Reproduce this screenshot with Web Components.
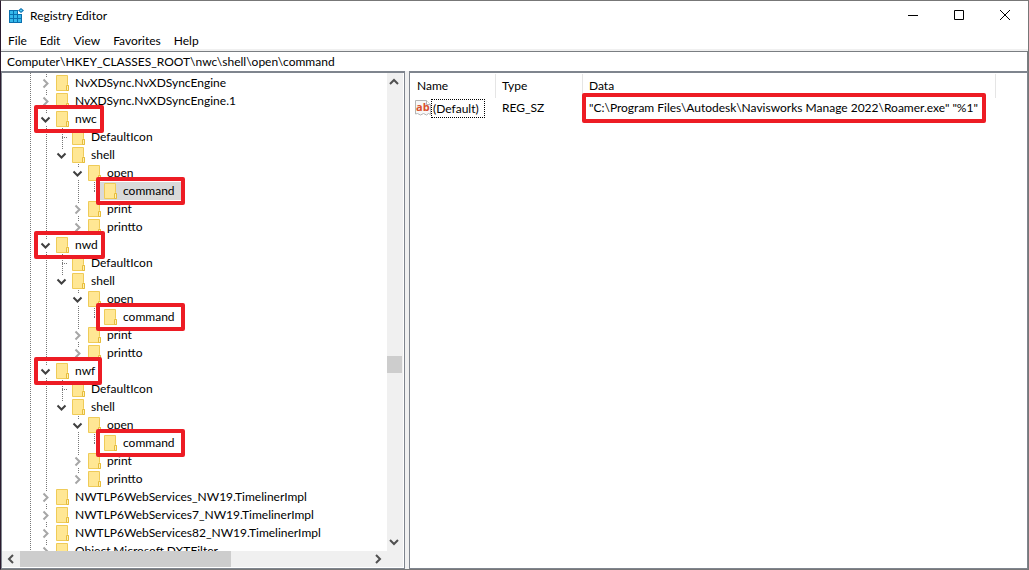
<!DOCTYPE html>
<html lang="en">
<head>
<meta charset="utf-8">
<title>Registry Editor</title>
<style>
  html, body { margin: 0; height: 100%; }
  body { font: 12px/18px Lato, "Open Sans", sans-serif; color: #000; background: #fff; overflow: hidden; }
</style>
</head>
<body>
<registry-window>
  <title-bar slot="title">Registry Editor</title-bar>
  <menu-bar slot="menu" items="File,Edit,View,Favorites,Help"></menu-bar>
  <address-bar slot="address" path="Computer\HKEY_CLASSES_ROOT\nwc\shell\open\command"></address-bar>
  <key-pane slot="tree">
    <key-item label="NvXDSync.NvXDSyncEngine" state="closed"></key-item>
    <key-item label="NvXDSync.NvXDSyncEngine.1" state="closed"></key-item>
    <key-item label="nwc" state="open" marked>
      <key-item label="DefaultIcon"></key-item>
      <key-item label="shell" state="open" last>
        <key-item label="open" state="open">
          <key-item label="command" marked selected last></key-item>
        </key-item>
        <key-item label="print" state="closed"></key-item>
        <key-item label="printto" state="closed" last></key-item>
      </key-item>
    </key-item>
    <key-item label="nwd" state="open" marked>
      <key-item label="DefaultIcon"></key-item>
      <key-item label="shell" state="open" last>
        <key-item label="open" state="open">
          <key-item label="command" marked last></key-item>
        </key-item>
        <key-item label="print" state="closed"></key-item>
        <key-item label="printto" state="closed" last></key-item>
      </key-item>
    </key-item>
    <key-item label="nwf" state="open" marked>
      <key-item label="DefaultIcon"></key-item>
      <key-item label="shell" state="open" last>
        <key-item label="open" state="open">
          <key-item label="command" marked last></key-item>
        </key-item>
        <key-item label="print" state="closed"></key-item>
        <key-item label="printto" state="closed" last></key-item>
      </key-item>
    </key-item>
    <key-item label="NWTLP6WebServices_NW19.TimelinerImpl" state="closed"></key-item>
    <key-item label="NWTLP6WebServices7_NW19.TimelinerImpl" state="closed"></key-item>
    <key-item label="NWTLP6WebServices82_NW19.TimelinerImpl" state="closed"></key-item>
    <key-item label="Object.Microsoft.DXTFilter" state="closed"></key-item>
  </key-pane>
  <value-list slot="values"></value-list>
</registry-window>

<script>
  const define = (name, html, setup) => {
    const template = document.createElement('template');
    template.innerHTML = html;
    customElements.define(name, class extends HTMLElement {
      constructor() {
        super();
        this.attachShadow({ mode: 'open' }).append(template.content.cloneNode(true));
      }
      connectedCallback() {
        if (setup) setup(this, this.shadowRoot);
      }
    });
  };

  define('registry-window', `
    <style>
      :host { display: flex; flex-direction: column; height: 100vh; box-sizing: border-box;
        border: 1px solid #777; border-left-color: #2b1a2e; background: #fff; }
      main { flex: 1; min-height: 0; display: grid; grid-template-columns: 404px 1fr; gap: 4px;
        background: #f0f0f0; border-right: 1px solid #7f858e; }
      ::slotted([slot=tree]), ::slotted([slot=values]) { min-width: 0; min-height: 0; }
    </style>
    <slot name="title"></slot>
    <slot name="menu"></slot>
    <slot name="address"></slot>
    <main><slot name="tree"></slot><slot name="values"></slot></main>`);

  define('title-bar', `
    <style>
      :host { display: flex; align-items: center; height: 30px; padding-left: 7px; }
      h1 { flex: 1; margin: 0 0 0 6px; font: inherit; }
      button { width: 46px; height: 28px; padding: 0; border: 0; background: none; display: grid; place-items: center; }
      .controls { display: flex; align-self: flex-start; }
      svg { display: block; }
    </style>
    <svg width="16" height="16" viewBox="0 0 16 16" aria-hidden="true">
      <path d="M1 2h9v4h4v9H1z" fill="#0a6fae"/>
      <path d="M2 3h3v3H2zM6 3h3v3H6zM2 7h3v3H2zM6 7h3v3H6zM10 7h3v3h-3zM2 11h3v3H2zM6 11h3v3H6zM10 11h3v3h-3z" fill="#35b8ea"/>
      <path d="M13 0l3 2.500-3 2.500-3-2.500z" fill="#0a6fae"/>
      <path d="M13 1.200l1.500 1.300-1.500 1.300-1.500-1.300z" fill="#58cdf5"/>
    </svg>
    <h1><slot></slot></h1>
    <div class="controls">
      <button aria-label="Minimize"><svg width="10" height="10"><path d="M0 5.500h10" stroke="#000"/></svg></button>
      <button aria-label="Maximize"><svg width="10" height="10"><path d="M.5.5h9v9h-9z" fill="none" stroke="#000"/></svg></button>
      <button aria-label="Close"><svg width="10" height="10"><path d="M0 0l10 10M10 0L0 10" stroke="#000"/></svg></button>
    </div>`);

  define('menu-bar', `
    <style>
      :host { display: block; border-bottom: 2px solid #f0f0f0; }
      nav { display: flex; height: 18px; }
      button { font: inherit; color: inherit; border: 0; background: none; padding: 1px 6px 0 7px; }
    </style>
    <nav aria-label="Menu"></nav>`, (host, root) => {
      root.querySelector('nav').replaceChildren(...host.getAttribute('items').split(',').map(text => {
        const button = document.createElement('button');
        button.textContent = text;
        return button;
      }));
    });

  define('address-bar', `
    <style>
      :host { display: block; border: solid #7a7e82; border-width: 1px 1px 0 0; }
      input { display: block; box-sizing: border-box; width: 100%; height: 19px; padding: 0 6px; border: 0;
        font: inherit; color: inherit; background: #fff; outline: 0; }
    </style>
    <input type="text" aria-label="Address">`, (host, root) => {
      root.querySelector('input').value = host.getAttribute('path');
    });

  define('key-pane', `
    <style>
      :host { display: grid; grid-template: minmax(0, 1fr) 17px / minmax(0, 1fr) 17px;
        border: solid #7f858e; border-width: 2px 1px 1px 1px; background: #fff; }
      .keys { overflow: hidden; padding: 1px 0 0 36px;
        background: repeating-linear-gradient(#777 0 1px, transparent 1px 2px) 28px 0 / 1px 100% no-repeat; }
      .bar { background: #f0f0f0; display: flex; align-items: center; }
      .vertical { flex-direction: column; margin-right: 1px; }
      .horizontal { margin: 0 1px 1px 0; grid-column: 1 / -1; padding-right: 16px; }
      .arrow { width: 18px; height: 18px; display: block; flex: none; }
      .vertical .arrow { width: 14px; align-self: flex-start; }
      .arrow path { fill: none; stroke: #505050; stroke-width: 2; }
      .thumb { background: #cdcdcd; }
      .track { flex: 1; display: flex; }
      .vertical .track { flex-direction: column; width: 100%; }
      .vertical .before { flex: 264; }
      .vertical .thumb { height: 17px; margin-right: 1px; }
      .vertical .after { flex: 160; }
      .horizontal .track { height: 100%; }
      .horizontal .thumb { flex: 211; }
      .horizontal .after { flex: 138; }
    </style>
    <div class="keys" role="tree"><slot></slot></div>
    <div class="bar vertical">
      <svg class="arrow" viewBox="2 0 14 18"><path d="M5 11l4-4 4 4"/></svg>
      <div class="track"><div class="before"></div><div class="thumb"></div><div class="after"></div></div>
      <svg class="arrow" viewBox="2 0 14 18"><path d="M5 7l4 4 4-4"/></svg>
    </div>
    <div class="bar horizontal">
      <svg class="arrow" viewBox="0 0 18 18"><path d="M11 5L7 9l4 4"/></svg>
      <div class="track"><div class="thumb"></div><div class="after"></div></div>
      <svg class="arrow" viewBox="0 0 18 18"><path d="M7 5l4 4-4 4"/></svg>
    </div>`);

  define('key-item', `
    <style>
      :host { display: block; white-space: nowrap;
        background: repeating-linear-gradient(#777 0 1px, transparent 1px 2px) 8px 0 / 1px 100% no-repeat; }
      :host([last]) { background-size: 1px 9px; }
      .row { position: relative; display: flex; width: max-content; height: 18px; }
      .twist { width: 14px; height: 18px; display: block; }
      .twist rect { fill: #fff; }
      .twist path { fill: none; stroke-width: 2; display: none; }
      :host([state=closed]) .shut { display: block; stroke: #a6a6a6; }
      :host([state=open]) .down { display: block; stroke: #404040; }
      :host(:not([state])) .twist rect { display: none; }
      :host(:not([state])) .link { display: block; stroke: #777; stroke-width: 1; stroke-dasharray: 1 1; }
      .label { display: flex; padding: 0 3px 0 4px; }
      :host([marked]:not([state])) .label { padding-right: 6px; }
      :host([selected]) .label { background: #d9d9d9; }
      .folder { width: 14px; height: 16px; margin: 1px 5px 0 0; display: block; }
      .callout { display: none; position: absolute; z-index: 1; inset: -5px -4px -5px -4px;
        border: 4px solid #ed1c24; border-radius: 2px; }
      :host([marked]) .callout { display: block; }
      :host(:not([state])) .callout { left: 10px; }
      .children { padding-left: 16px; }
    </style>
    <div class="row" role="treeitem">
      <svg class="twist" viewBox="0 0 14 18" aria-hidden="true">
        <rect x="2" y="3" width="12" height="13"/>
        <path class="shut" d="M5.500 5.500l4 4-4 4"/>
        <path class="down" d="M3.500 7.500l4 4 4-4"/>
        <path class="link" d="M8 9.500h6"/>
      </svg>
      <span class="label">
        <svg class="folder" viewBox="0 0 14 16" aria-hidden="true">
          <path d="M.5.5h11v9l1 1v5H.5z" fill="#ffe794" stroke="#efcb58"/>
          <path d="M10.500 10.500h2v5h-2z" fill="#fff0b5" stroke="#e6bd3c"/>
        </svg>
        <span class="text"></span>
      </span>
      <span class="callout"></span>
    </div>
    <div class="children" role="group"><slot></slot></div>`, (host, root) => {
      root.querySelector('.text').textContent = host.getAttribute('label');
    });

  define('value-icon', `
    <style>
      :host { display: block; width: 16px; height: 16px; }
      svg { display: block; overflow: visible; }
      text { font: bold 11px/11px "Open Sans", sans-serif; fill: #d9502e; }
    </style>
    <svg width="16" height="16" viewBox="0 0 16 16">
      <path d="M.5.5h11l4 4v10l-2-1-2 1.500-3-1.500-3 1.500-3-1.500-2 .5z" fill="#f8f8f8" stroke="#b5b5b5"/>
      <path d="M11.500.5v4h4" fill="#fff" stroke="#b5b5b5"/>
      <text x="1" y="11">ab</text>
    </svg>`);

  define('value-list', `
    <style>
      :host { display: block; border: solid #7f858e; border-width: 2px 0 1px 1px; padding-top: 1px; background: #fff; overflow: hidden; }
      table { border-collapse: separate; border-spacing: 0; table-layout: fixed; width: 586px; }
      th { box-sizing: border-box; height: 24px; padding: 0 0 0 6px; text-align: left; font-weight: normal; border-right: 1px solid #e5e5e5; }
      th.name { width: 86px; padding-left: 7px; }
      .type { width: 87px; }
      td { height: 20px; padding: 0 0 0 6px; white-space: nowrap; }
      td.name { padding: 0 0 0 5px; }
      .entry { display: flex; align-items: center; }
      .entry span { height: 19px; box-sizing: border-box; line-height: 17px; padding: 0 5px 0 1px; border: 1px dotted #000; }
      .data { position: relative; }
      .callout { position: absolute; inset: -5px 10px -5px -1px; border: 4px solid #ed1c24; border-radius: 2px; }
    </style>
    <table>
      <thead><tr><th class="name">Name</th><th class="type">Type</th><th>Data</th></tr></thead>
      <tbody><tr>
        <td class="name"><div class="entry"><value-icon></value-icon><span>(Default)</span></div></td>
        <td>REG_SZ</td>
        <td class="data">"C:\\Program Files\\Autodesk\\Navisworks Manage 2022\\Roamer.exe" "%1"<div class="callout"></div></td>
      </tr></tbody>
    </table>`);
</script>
</body>
</html>
